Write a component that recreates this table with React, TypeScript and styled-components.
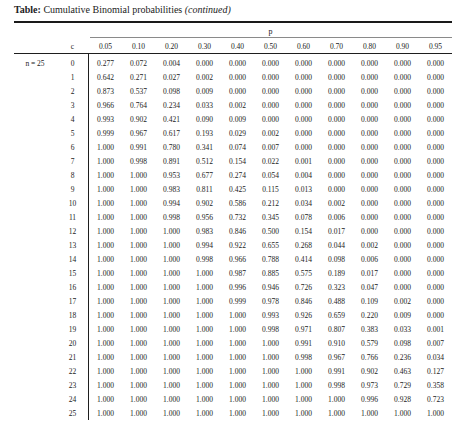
import React from 'react';
import styled, { createGlobalStyle } from 'styled-components';

const GlobalStyle = createGlobalStyle`
  html, body {
    margin: 0;
    padding: 0;
    background: #ffffff;
  }
  body {
    font-family: 'Liberation Serif', 'Times New Roman', serif;
    color: #222;
  }
`;

const probs = ['0.05', '0.10', '0.20', '0.30', '0.40', '0.50', '0.60', '0.70', '0.80', '0.90', '0.95'];

// values below 1.000 per row, the rest of the row is filled with 0.000 / 1.000
const rows: string[][] = [
  ['0.277', '0.072', '0.004', '0.000', '0.000', '0.000', '0.000', '0.000', '0.000', '0.000', '0.000'],
  ['0.642', '0.271', '0.027', '0.002', '0.000', '0.000', '0.000', '0.000', '0.000', '0.000', '0.000'],
  ['0.873', '0.537', '0.098', '0.009', '0.000', '0.000', '0.000', '0.000', '0.000', '0.000', '0.000'],
  ['0.966', '0.764', '0.234', '0.033', '0.002', '0.000', '0.000', '0.000', '0.000', '0.000', '0.000'],
  ['0.993', '0.902', '0.421', '0.090', '0.009', '0.000', '0.000', '0.000', '0.000', '0.000', '0.000'],
  ['0.999', '0.967', '0.617', '0.193', '0.029', '0.002', '0.000', '0.000', '0.000', '0.000', '0.000'],
  ['1.000', '0.991', '0.780', '0.341', '0.074', '0.007', '0.000', '0.000', '0.000', '0.000', '0.000'],
  ['1.000', '0.998', '0.891', '0.512', '0.154', '0.022', '0.001', '0.000', '0.000', '0.000', '0.000'],
  ['1.000', '1.000', '0.953', '0.677', '0.274', '0.054', '0.004', '0.000', '0.000', '0.000', '0.000'],
  ['1.000', '1.000', '0.983', '0.811', '0.425', '0.115', '0.013', '0.000', '0.000', '0.000', '0.000'],
  ['1.000', '1.000', '0.994', '0.902', '0.586', '0.212', '0.034', '0.002', '0.000', '0.000', '0.000'],
  ['1.000', '1.000', '0.998', '0.956', '0.732', '0.345', '0.078', '0.006', '0.000', '0.000', '0.000'],
  ['1.000', '1.000', '1.000', '0.983', '0.846', '0.500', '0.154', '0.017', '0.000', '0.000', '0.000'],
  ['1.000', '1.000', '1.000', '0.994', '0.922', '0.655', '0.268', '0.044', '0.002', '0.000', '0.000'],
  ['1.000', '1.000', '1.000', '0.998', '0.966', '0.788', '0.414', '0.098', '0.006', '0.000', '0.000'],
  ['1.000', '1.000', '1.000', '1.000', '0.987', '0.885', '0.575', '0.189', '0.017', '0.000', '0.000'],
  ['1.000', '1.000', '1.000', '1.000', '0.996', '0.946', '0.726', '0.323', '0.047', '0.000', '0.000'],
  ['1.000', '1.000', '1.000', '1.000', '0.999', '0.978', '0.846', '0.488', '0.109', '0.002', '0.000'],
  ['1.000', '1.000', '1.000', '1.000', '1.000', '0.993', '0.926', '0.659', '0.220', '0.009', '0.000'],
  ['1.000', '1.000', '1.000', '1.000', '1.000', '0.998', '0.971', '0.807', '0.383', '0.033', '0.001'],
  ['1.000', '1.000', '1.000', '1.000', '1.000', '1.000', '0.991', '0.910', '0.579', '0.098', '0.007'],
  ['1.000', '1.000', '1.000', '1.000', '1.000', '1.000', '0.998', '0.967', '0.766', '0.236', '0.034'],
  ['1.000', '1.000', '1.000', '1.000', '1.000', '1.000', '1.000', '0.991', '0.902', '0.463', '0.127'],
  ['1.000', '1.000', '1.000', '1.000', '1.000', '1.000', '1.000', '0.998', '0.973', '0.729', '0.358'],
  ['1.000', '1.000', '1.000', '1.000', '1.000', '1.000', '1.000', '1.000', '0.996', '0.928', '0.723'],
  ['1.000', '1.000', '1.000', '1.000', '1.000', '1.000', '1.000', '1.000', '1.000', '1.000', '1.000'],
];

const Page = styled.div`
  width: 438px;
  padding: 3px 0 0 14px;
`;

const Title = styled.div`
  font-size: 10px;
  line-height: 13px;
  color: #1c1c1c;

  b {
    font-weight: 700;
  }
  i {
    font-style: italic;
  }
`;

const Rule = styled.div<{ $weight: number; $color: string; $inset?: number }>`
  height: 0;
  border-top: ${({ $weight }) => $weight}px solid ${({ $color }) => $color};
  margin-left: ${({ $inset }) => $inset ?? 0}px;
`;

const TopRule = styled(Rule)`
  margin-top: 5px;
`;

const PLabel = styled.div`
  margin: 3px 0 0 75px;
  height: 11px;
  font-size: 8px;
  line-height: 11px;
  text-align: center;
`;

const HeadRow = styled.div`
  display: grid;
  grid-template-columns: 42px 33px repeat(11, 33px);
  height: 15px;
  align-items: center;
  font-size: 7.5px;
  padding-top: 2px;
  box-sizing: border-box;
`;

const HeadCell = styled.div`
  text-align: center;
`;

const Body = styled.div`
  display: grid;
  grid-template-columns: 75px 363px;
`;

const Labels = styled.div`
  display: grid;
  grid-template-columns: 42px 33px;
  grid-auto-rows: 14px;
  padding-top: 2px;
  font-size: 7.5px;
`;

const Label = styled.div`
  display: flex;
  align-items: center;
  justify-content: center;
`;

const Values = styled.div`
  display: grid;
  grid-template-columns: repeat(11, 33px);
  grid-auto-rows: 14px;
  padding-top: 2px;
  margin-left: -1px;
  border-left: 1.5px solid #1e1e1e;
  font-size: 7.5px;
  color: #1c1c1c;
`;

const Value = styled.div`
  display: flex;
  align-items: center;
  justify-content: center;
`;

export default function App() {
  return (
    <>
      <GlobalStyle />
      <Page>
        <Title>
          <b>Table:</b> Cumulative Binomial probabilities <i>(continued)</i>
        </Title>
        <TopRule $weight={2} $color="#1a1a1a" />
        <PLabel>p</PLabel>
        <Rule $weight={1} $color="#8a8a8a" $inset={76} />
        <HeadRow>
          <HeadCell />
          <HeadCell>c</HeadCell>
          {probs.map((p) => (
            <HeadCell key={p}>{p}</HeadCell>
          ))}
        </HeadRow>
        <Rule $weight={1.5} $color="#1e1e1e" />
        <Body>
          <Labels>
            {rows.map((_, c) => (
              <React.Fragment key={c}>
                <Label>{c === 0 ? 'n = 25' : ''}</Label>
                <Label>{c}</Label>
              </React.Fragment>
            ))}
          </Labels>
          <Values>
            {rows.map((row, c) =>
              row.map((v, i) => <Value key={`${c}-${i}`}>{v}</Value>)
            )}
          </Values>
        </Body>
      </Page>
    </>
  );
}
